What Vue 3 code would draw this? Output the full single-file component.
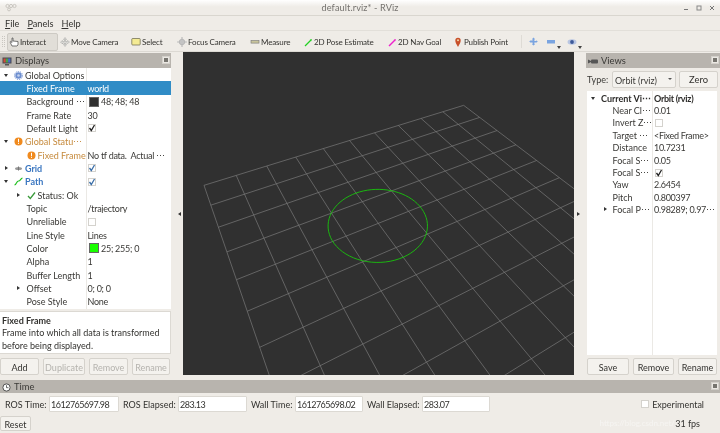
<script setup>
import { computed } from 'vue'

const tools = [
  { t: 'Interact', i: 'hand', on: true, w: 51 },
  { t: 'Move Camera', i: 'move', w: 71 },
  { t: 'Select', i: 'select', w: 46 },
  { t: 'Focus Camera', i: 'focus', w: 73 },
  { t: 'Measure', i: 'measure', w: 53 },
  { t: '2D Pose Estimate', i: 'pose', w: 84 },
  { t: '2D Nav Goal', i: 'nav', w: 66 },
  { t: 'Publish Point', i: 'pin', w: 60 }
]

const displays = [
  { a: 'down', ind: 0, ico: 'gear', n: 'Global Options' },
  { ind: 1, n: 'Fixed Frame', v: 'world', sel: true },
  { ind: 1, n: 'Background ⋯', swatch: '#303030', v: '48; 48; 48' },
  { ind: 1, n: 'Frame Rate', v: '30' },
  { ind: 1, n: 'Default Light', chk: true },
  { a: 'down', ind: 0, ico: 'warn', n: 'Global Statu⋯', cls: 'warnc' },
  { ind: 1, ico: 'warn', n: 'Fixed Frame', v: 'No tf data.  Actual ⋯', cls: 'warnc', deep: true },
  { a: 'right', ind: 0, ico: 'grid', n: 'Grid', cls: 'blue', chk: true, cb: true },
  { a: 'down', ind: 0, ico: 'path', n: 'Path', cls: 'blue', chk: true, cb: true },
  { a: 'right', a2: true, ind: 1, ico: 'ok', n: 'Status: Ok', deep: true },
  { ind: 1, n: 'Topic', v: '/trajectory' },
  { ind: 1, n: 'Unreliable', box: true },
  { ind: 1, n: 'Line Style', v: 'Lines' },
  { ind: 1, n: 'Color', swatch: '#19ff00', v: '25; 255; 0' },
  { ind: 1, n: 'Alpha', v: '1' },
  { ind: 1, n: 'Buffer Length', v: '1' },
  { a: 'right', a2: true, ind: 1, n: 'Offset', v: '0; 0; 0' },
  { ind: 1, n: 'Pose Style', v: 'None' }
]

const views = [
  { n: 'Near Cl⋯', v: '0.01' },
  { n: 'Invert Z⋯', box: true },
  { n: 'Target ⋯', v: '<Fixed Frame>' },
  { n: 'Distance', v: '10.7231' },
  { n: 'Focal S⋯', v: '0.05' },
  { n: 'Focal S⋯', chk: true },
  { n: 'Yaw', v: '2.6454' },
  { n: 'Pitch', v: '0.800397' },
  { n: 'Focal P⋯', v: '0.98289; 0.97⋯', a: true }
]

const times = [
  { l: 'ROS Time:', v: '1612765697.98', lw: 44, w: 70 },
  { l: 'ROS Elapsed:', v: '283.13', lw: 55, w: 69 },
  { l: 'Wall Time:', v: '1612765698.02', lw: 44, w: 68 },
  { l: 'Wall Elapsed:', v: '283.07', lw: 55, w: 68 }
]

// Ground-plane projection, solved from four known grid corners.
function solve(src, dst) {
  const A = []
  src.forEach(([x, y], i) => {
    const [u, v] = dst[i]
    A.push([x, y, 1, 0, 0, 0, -x * u, -y * u, u])
    A.push([0, 0, 0, x, y, 1, -x * v, -y * v, v])
  })
  for (let c = 0; c < 8; c++) {
    let p = c
    for (let r = c + 1; r < 8; r++) if (Math.abs(A[r][c]) > Math.abs(A[p][c])) p = r
    ;[A[c], A[p]] = [A[p], A[c]]
    for (let r = 0; r < 8; r++) {
      if (r === c) continue
      const f = A[r][c] / A[c][c]
      for (let k = c; k < 9; k++) A[r][k] -= f * A[c][k]
    }
  }
  return A.map((row, i) => row[8] / row[i])
}
const z = (x, y) => [(x / 3 + 170) - 183, (y / 3 + 45) - 52]
const H = solve(
  [[0, 0], [10, 0], [0, 6], [10, 5]],
  [z(102, 421), z(881, 181), z(269, 907), z(1168, 398)]
)
const proj = (x, y) => {
  const w = H[6] * x + H[7] * y + 1
  return [(H[0] * x + H[1] * y + H[2]) / w, (H[3] * x + H[4] * y + H[5]) / w]
}
const f = (p) => p[0].toFixed(2) + ' ' + p[1].toFixed(2)
const gridPath = computed(() => {
  let d = ''
  for (let i = 0; i <= 10; i++) {
    d += `M${f(proj(i, 0))}L${f(proj(i, 10))}`
    d += `M${f(proj(0, i))}L${f(proj(10, i))}`
  }
  return d
})
const circlePath = computed(() => {
  const pts = []
  for (let i = 0; i < 72; i++) {
    const a = (i / 72) * Math.PI * 2
    pts.push(f(proj(4 + 1.4 * Math.cos(a), 3.97 + 1.4 * Math.sin(a))))
  }
  return 'M' + pts.join('L') + 'Z'
})
</script>

<template>
  <div class="win">
    <div class="title">
      <div class="tside">
        <svg width="12" height="9" viewBox="0 0 12 9"><g fill="none" stroke="#c9c6c0"><circle cx="2.5" cy="3" r="1.6"/><circle cx="6" cy="3" r="1.6"/><circle cx="9.5" cy="3" r="1.6"/><circle cx="4" cy="6.5" r="1.4"/></g></svg>
      </div>
      <span class="ttext">default.rviz* - RViz</span>
      <div class="tside wbtns">
        <svg width="6" height="6" viewBox="0 0 6 6"><path d="M1 4.500h4" stroke="#777"/></svg>
        <svg width="6" height="6" viewBox="0 0 6 6"><rect x="1" y="1" width="4" height="4" fill="none" stroke="#888"/></svg>
        <svg width="6" height="6" viewBox="0 0 6 6"><path d="M1 1l4 4M5 1L1 5" stroke="#777"/></svg>
      </div>
    </div>

    <div class="menu">
      <span><u>F</u>ile</span><span><u>P</u>anels</span><span><u>H</u>elp</span>
    </div>

    <div class="tool">
      <div class="grip"></div>
      <div v-for="b in tools" :key="b.t" class="tbtn" :class="{ on: b.on }" :style="{ width: b.w + 'px' }">
        <svg class="tico" width="10" height="10" viewBox="0 0 10 10">
          <g v-if="b.i === 'hand'"><path d="M3 1v4.500L1.500 4.300 1 5l2 4h5l1-1V4.500L4 4V1z" fill="#fff" stroke="#555" stroke-width=".8"/></g>
          <g v-else-if="b.i === 'move'"><path d="M5 .5l1.500 2h-1v2h2v-1l2 1.500-2 1.500V6h-2v1.500h1L5 9.500 3.500 7.500h1V6h-2v1L.5 5l2-1.500v1h2v-2h-1z" fill="#e2e2de" stroke="#999" stroke-width=".5"/></g>
          <g v-else-if="b.i === 'select'"><rect x=".8" y="1.500" width="8.400" height="6.500" rx=".8" fill="#f4eb94" stroke="#66634a" stroke-width=".7"/></g>
          <g v-else-if="b.i === 'focus'"><path d="M5 0v10M0 5h10" stroke="#bbb" stroke-width="1.200"/><circle cx="5" cy="5" r="2.800" fill="#c4c4c4" stroke="#aaa" stroke-width=".6"/></g>
          <g v-else-if="b.i === 'measure'"><rect x="1" y="3.500" width="8" height="2.600" fill="#c8c49c" stroke="#777" stroke-width=".6"/></g>
          <g v-else-if="b.i === 'pose'"><path d="M2 9L8 3" stroke="#22d022" stroke-width="1.300"/><path d="M9 2L6.800 2.800 8.200 4.200z" fill="#22d022"/></g>
          <g v-else-if="b.i === 'nav'"><path d="M2 9L8 3" stroke="#ee22cc" stroke-width="1.500"/><path d="M9 2L6.800 2.800 8.200 4.200z" fill="#ee22cc"/></g>
          <g v-else-if="b.i === 'pin'"><path d="M5 10C3.500 7 2.300 5.500 2.300 3.500a2.700 2.700 0 015.400 0C7.700 5.500 6.500 7 5 10z" fill="#c8502a"/><circle cx="5" cy="3.300" r="1" fill="#f2d9a8"/></g>
        </svg>
        <span>{{ b.t }}</span>
      </div>
      <div class="tsep"></div>
      <div class="miniwrap m1">
        <svg width="9" height="9" viewBox="0 0 10 10"><path d="M5 .5l1.800 2H6v2h2v-.8L9.800 5 8 6.300V6H6v1.700h.8L5 9.500 3.200 7.700H4V6H2v.3L.2 5 2 3.700V4h2V2.500h-.8z" fill="#7aa4e0"/></svg>
      </div>
      <div class="miniwrap m2">
        <svg width="10" height="10" viewBox="0 0 10 10"><rect x="1" y="3" width="8" height="3.500" fill="#7aa4e0"/></svg>
        <i class="drop"></i>
      </div>
      <div class="miniwrap m2">
        <svg width="10" height="10" viewBox="0 0 10 10"><ellipse cx="5" cy="5" rx="4.500" ry="2.800" fill="#b9c6e2"/><circle cx="5" cy="5" r="1.900" fill="#3e5a9a"/></svg>
        <i class="drop"></i>
      </div>
    </div>

    <div class="main">
      <aside class="side left">
        <div class="dock">
          <svg width="10" height="9" viewBox="0 0 10 9"><rect x=".5" y=".5" width="9" height="6" fill="#4a4a52"/><rect x="1.500" y="1.500" width="2.300" height="4" fill="#d04a3a"/><rect x="3.800" y="1.500" width="2.300" height="4" fill="#4aa04a"/><rect x="6.100" y="1.500" width="2.300" height="4" fill="#4a6ac8"/><rect x="3" y="7" width="4" height="1.500" fill="#555"/></svg>
          <span>Displays</span>
          <b class="close"></b>
        </div>
        <div class="tree ltree">
          <div class="vline"></div>
          <div v-for="r in displays" :key="r.n + r.ind + r.v" class="row" :class="{ sel: r.sel }">
            <div class="cname" :class="r.cls">
              <i v-if="r.a" class="ar" :class="[r.a, { a2: r.a2 }]"></i>
              <span class="ipad" :class="{ root: r.ind === 0, deep: r.deep }"></span>
              <svg v-if="r.ico" class="nico" width="9" height="9" viewBox="0 0 9 9">
                <g v-if="r.ico === 'gear'"><circle cx="4.500" cy="4.500" r="3.200" fill="#6e8fd0"/><circle cx="4.500" cy="4.500" r="4" fill="none" stroke="#6e8fd0" stroke-width="1" stroke-dasharray="1.200 1"/><circle cx="4.500" cy="4.500" r="1.300" fill="#c6d4ee"/></g>
                <g v-else-if="r.ico === 'warn'"><circle cx="4.500" cy="4.500" r="4" fill="#f08a1e"/><rect x="4" y="1.800" width="1" height="3.300" fill="#fff"/><rect x="4" y="5.800" width="1" height="1.100" fill="#fff"/></g>
                <g v-else-if="r.ico === 'grid'"><ellipse cx="4.500" cy="4.500" rx="3.500" ry="1.600" fill="#9a9a9a"/><path d="M4.500 2.500v4" stroke="#777"/></g>
                <g v-else-if="r.ico === 'path'"><path d="M.5 8C2.500 7.500 2.500 4 4.500 4S6.500 1.500 8.500 1" fill="none" stroke="#20c020" stroke-width="1.200"/></g>
                <g v-else-if="r.ico === 'ok'"><path d="M1 5l2.300 2.500L8 1.500" fill="none" stroke="#3a9a3a" stroke-width="1.300"/></g>
              </svg>
              <span class="nm">{{ r.n }}</span>
            </div>
            <div class="cval">
              <i v-if="r.swatch" class="swatch" :style="{ background: r.swatch }"></i>
              <span v-if="r.chk || r.box" class="cbx" :class="{ bluec: r.cb }">
                <svg v-if="r.chk" width="8" height="8" viewBox="0 0 8 8"><path d="M1.500 4l1.800 2.500L6.500 1" fill="none" :stroke="r.cb ? '#3a6ea8' : '#222'" stroke-width="1.300"/></svg>
              </span>
              <span v-if="r.v" class="vtxt">{{ r.v }}</span>
            </div>
          </div>
        </div>
        <div class="help">
          <b>Fixed Frame</b>
          <p>Frame into which all data is transformed before being displayed.</p>
        </div>
        <div class="btns l">
          <button class="bt w39">Add</button>
          <button class="bt dis w42">Duplicate</button>
          <button class="bt dis w39">Remove</button>
          <button class="bt dis w38">Rename</button>
        </div>
      </aside>

      <div class="split"><i class="tri l"></i></div>

      <div class="view">
        <svg class="scene" width="391" height="323" viewBox="0 0 391 323">
          <path :d="gridPath" fill="none" stroke="#7a7a7a" stroke-width=".7"/>
          <path :d="circlePath" fill="none" stroke="#19c40c" stroke-width=".9"/>
        </svg>
      </div>

      <div class="split"><i class="tri r"></i></div>

      <aside class="side right">
        <div class="dock">
          <svg width="10" height="9" viewBox="0 0 10 9"><rect x="3" y="2.500" width="7" height="4" rx="1" fill="#555"/><path d="M0 2.500l3 1.500v1L0 6.500z" fill="#555"/></svg>
          <span>Views</span>
          <b class="close"></b>
        </div>
        <div class="type">
          <span class="tlabel">Type:</span>
          <div class="combo">Orbit (rviz)<i class="cdrop"></i></div>
          <button class="bt zero">Zero</button>
        </div>
        <div class="tree vtree">
          <div class="vline v"></div>
          <div class="vrow hd">
            <div class="vname"><i class="ar down va"></i><span class="hdn">Current Vi⋯</span></div>
            <div class="vval">Orbit (rviz)</div>
          </div>
          <div v-for="(r, i) in views" :key="i" class="vrow">
            <div class="vname"><i v-if="r.a" class="ar right vb"></i><span class="vn">{{ r.n }}</span></div>
            <div class="vval">
              <span v-if="r.chk || r.box" class="cbx">
                <svg v-if="r.chk" width="8" height="8" viewBox="0 0 8 8"><path d="M1.500 4l1.800 2.500L6.500 1" fill="none" stroke="#222" stroke-width="1.300"/></svg>
              </span>
              <template v-else>{{ r.v }}</template>
            </div>
          </div>
        </div>
        <div class="btns r">
          <button class="bt w42">Save</button>
          <button class="bt w41">Remove</button>
          <button class="bt w39">Rename</button>
        </div>
      </aside>
    </div>

    <div class="timedock">
      <div class="dock full">
        <svg width="9" height="9" viewBox="0 0 9 9"><circle cx="4.500" cy="4.500" r="3.600" fill="#fff" stroke="#444" stroke-width=".9"/><path d="M4.500 2.200v2.500h2" fill="none" stroke="#444" stroke-width=".8"/></svg>
        <span>Time</span>
        <b class="close"></b>
      </div>
      <div class="trow">
        <template v-for="t in times" :key="t.l">
          <label :style="{ width: t.lw + 'px' }">{{ t.l }}</label>
          <div class="inp" :style="{ width: t.w + 'px' }">{{ t.v }}</div>
        </template>
        <div class="exp"><span class="cbx big"></span>Experimental</div>
      </div>
      <div class="brow">
        <button class="bt reset">Reset</button>
        <span class="wm">https://blog.csdn.net/</span>
        <span class="fps">31 fps</span>
      </div>
    </div>
  </div>
</template>

<style scoped>
.win {
  width: 720px;
  height: 433px;
  background: #efece7;
  color: #33322f;
  font: 9px/1 Lato, "Open Sans", sans-serif;
  display: flex;
  flex-direction: column;
  overflow: hidden;
  filter: blur(.35px);
}
.title {
  height: 16px;
  flex: none;
  display: flex;
  align-items: center;
  background: linear-gradient(#fff, #efece7 45%);
  border-bottom: 1px solid #d9d6cf;
  box-sizing: border-box;
}
.ttext { color: #75736f; font-size: 9.2px; flex: none; padding-top: 1px; letter-spacing: .1px; }
.tside { flex: 1; display: flex; align-items: center; padding-left: 5px; }
.wbtns { gap: 7px; justify-content: flex-end; padding: 0 5px 0 0; }
.menu {
  height: 15px;
  flex: none;
  display: flex;
  gap: 8px;
  align-items: center;
  padding: 1px 0 0 5px;
  border-bottom: 1px solid #e2dfd9;
  font-size: 9.2px;
  box-sizing: border-box;
}
.tool {
  height: 21px;
  flex: none;
  display: flex;
  align-items: center;
  padding: 1px 0 0 2px;
  border-bottom: 1px solid #dcd9d3;
  box-sizing: border-box;
}
.grip { width: 3px; height: 11px; margin-right: 2px; border-left: 1px dotted #c9c6c0; border-right: 1px dotted #c9c6c0; box-sizing: border-box; flex: none; }
.tbtn {
  height: 18px;
  display: flex;
  align-items: center;
  gap: 1px;
  font-size: 8px;
  letter-spacing: -.15px;
  box-sizing: border-box;
  padding-left: 1px;
  border: 1px solid transparent;
  border-radius: 2px;
  flex: none;
  white-space: nowrap;
}
.tbtn.on { background: #e1ded8; border-color: #cdcac4; }
.tico { flex: none; }
.tsep { width: 1px; height: 13px; background: #dedbd5; margin: 0 7px 0 10px; flex: none; }
.miniwrap { height: 16px; position: relative; display: flex; align-items: center; box-sizing: border-box; flex: none; }
.m1 { width: 17px; }
.m2 { width: 21px; }
.drop { position: absolute; right: 6px; bottom: 1px; border: 2.5px solid transparent; border-top: 3px solid #444; border-bottom: 0; }
.main { flex: 1; min-height: 0; display: flex; }
.side { display: flex; flex-direction: column; flex: none; padding-top: 1px; }
.side.left { width: 171px; }
.side.right { width: 134px; }
.dock {
  height: 15px;
  flex: none;
  background: #b8b4ae;
  display: flex;
  align-items: center;
  gap: 3px;
  padding: 1px 2px 0;
  font-size: 9.4px;
  position: relative;
  color: #3b3a37;
  box-sizing: border-box;
}
.close {
  position: absolute;
  right: 1px;
  top: 3px;
  width: 8px;
  height: 8px;
  background: #ebe8e3;
  border: 1px solid #d4d1cb;
  box-sizing: border-box;
}
.close::after { content: ""; position: absolute; left: 1px; top: 1px; width: 4px; height: 4px; background: #77756f; }
.tree { background: #fff; position: relative; overflow: hidden; }
.ltree { height: 241px; flex: none; }
.vline { position: absolute; left: 86px; top: 0; bottom: 0; width: 1px; background: #ebe9e5; }
.row { height: 13.33px; display: flex; align-items: center; position: relative; color: #3a3936; box-sizing: border-box; padding-top: 1px; }
.row.sel { background: #308cc6; color: #fff; }
.cname { width: 86.5px; height: 100%; flex: none; display: flex; align-items: center; position: relative; white-space: nowrap; overflow: hidden; }
.ipad { width: 26.5px; flex: none; }
.ipad.root { width: 14px; }
.nico { margin-right: 2px; flex: none; }
.warnc { color: #c68a3c; }
.blue { color: #3a76c0; font-weight: 700; }
.cval { flex: 1; display: flex; align-items: center; gap: 2px; padding-left: 1px; white-space: nowrap; overflow: hidden; }
.vtxt { white-space: pre; letter-spacing: -.25px; }
.ar { position: absolute; border: 2.5px solid transparent; width: 0; height: 0; }
.ar.down { left: 4px; top: 4.5px; border-top: 3px solid #333; border-bottom: 0; }
.ar.right { left: 5px; top: 4px; border-left: 3px solid #333; border-right: 0; }
.ar.right.a2 { left: 17px; }
.swatch { width: 10px; height: 10px; border: 1px solid #666; box-sizing: border-box; margin-left: 1.5px; flex: none; }
.cbx { width: 8px; height: 8px; border: 1px solid #d4d2cd; background: #fff; display: inline-flex; align-items: center; justify-content: center; box-sizing: border-box; margin-left: .5px; flex: none; }
.cbx svg { flex: none; }
.help {
  height: 43px;
  flex: none;
  background: #fff;
  border: 1px solid #dcd9d3;
  border-left: 0;
  box-sizing: border-box;
  margin-top: 2px;
  padding: 2.5px 2px;
  line-height: 12.5px;
}
.help b { font-weight: 700; display: block; }
.help p { margin: 0; }
.btns { display: flex; padding-top: 4px; height: 21px; box-sizing: border-box; gap: 4px; flex: none; }
.btns.r { padding-top: 3px; padding-left: 1px; }
.bt {
  height: 17px;
  background: #f4f2ee;
  border: 1px solid #d5d2cc;
  border-radius: 2px;
  font: inherit;
  color: #33322f;
  padding: 1px 0 0;
  box-sizing: border-box;
  flex: none;
}
.bt.dis { color: #b5b3ae; }
.w38 { width: 38px; }
.w39 { width: 39px; }
.w41 { width: 41px; }
.w42 { width: 42px; }
.split { width: 12px; flex: none; position: relative; }
.tri { position: absolute; top: 159.5px; border: 2.5px solid transparent; }
.tri.l { left: 6.5px; border-right: 3px solid #333; border-left: 0; }
.tri.r { left: 3px; border-left: 3px solid #333; border-right: 0; }
.view { width: 391px; height: 323px; flex: none; background: #303030; overflow: hidden; }
.scene { display: block; }
.type { height: 23px; flex: none; display: flex; align-items: flex-start; padding: 3px 0 0 1px; color: #3b3a37; box-sizing: border-box; }
.tlabel { width: 25px; flex: none; line-height: 18px; }
.combo {
  width: 64px;
  height: 17px;
  box-sizing: border-box;
  border: 1px solid #d5d2cc;
  background: #f4f2ee;
  border-radius: 2px;
  display: flex;
  align-items: center;
  padding: 1px 0 0 2px;
  position: relative;
  flex: none;
}
.cdrop { position: absolute; right: 3px; top: 6px; border: 2px solid transparent; border-top: 2.5px solid #555; border-bottom: 0; }
.zero { width: 39px; height: 17px; margin-left: 3px; font-size: 9.4px; }
.vtree { flex: none; margin: 0 3px 0 1px; height: 264px; padding-top: 1px; box-sizing: border-box; }
.vline.v { left: 65px; }
.vrow { height: 12.4px; display: flex; align-items: center; position: relative; color: #3a3936; white-space: nowrap; }
.hd { font-weight: 700; color: #2e2d2b; }
.vname { width: 66px; flex: none; position: relative; overflow: hidden; display: flex; align-items: center; height: 100%; }
.hdn { padding-left: 14px; }
.vn { padding-left: 25.5px; }
.ar.va { left: 4px; top: 5px; }
.ar.vb { left: 17px; top: 3.5px; }
.vval { padding-left: 1px; display: flex; align-items: center; letter-spacing: -.3px; }
.timedock { height: 53px; flex: none; display: flex; flex-direction: column; }
.dock.full { height: 13px; }
.dock.full .close { top: 2px; }
.trow { height: 22px; display: flex; align-items: center; padding-left: 5px; flex: none; }
.trow label { flex: none; white-space: nowrap; }
.inp {
  height: 16px;
  background: #fff;
  border: 1px solid #dcd9d3;
  border-radius: 1px;
  box-sizing: border-box;
  padding-left: 1px;
  display: flex;
  align-items: center;
  margin-right: 4px;
  flex: none;
  letter-spacing: -.5px;
}
.exp { margin-left: auto; margin-right: 16px; display: flex; align-items: center; gap: 3px; }
.cbx.big { margin: 0; }
.brow { flex: 1; display: flex; align-items: flex-start; padding-top: 1px; position: relative; }
.reset { width: 31px; height: 15px; }
.fps { position: absolute; right: 20px; top: 4px; }
.wm { position: absolute; right: 45px; top: 4px; color: #f8f7f5; font-size: 8px; opacity: .8; white-space: nowrap; }
</style>
